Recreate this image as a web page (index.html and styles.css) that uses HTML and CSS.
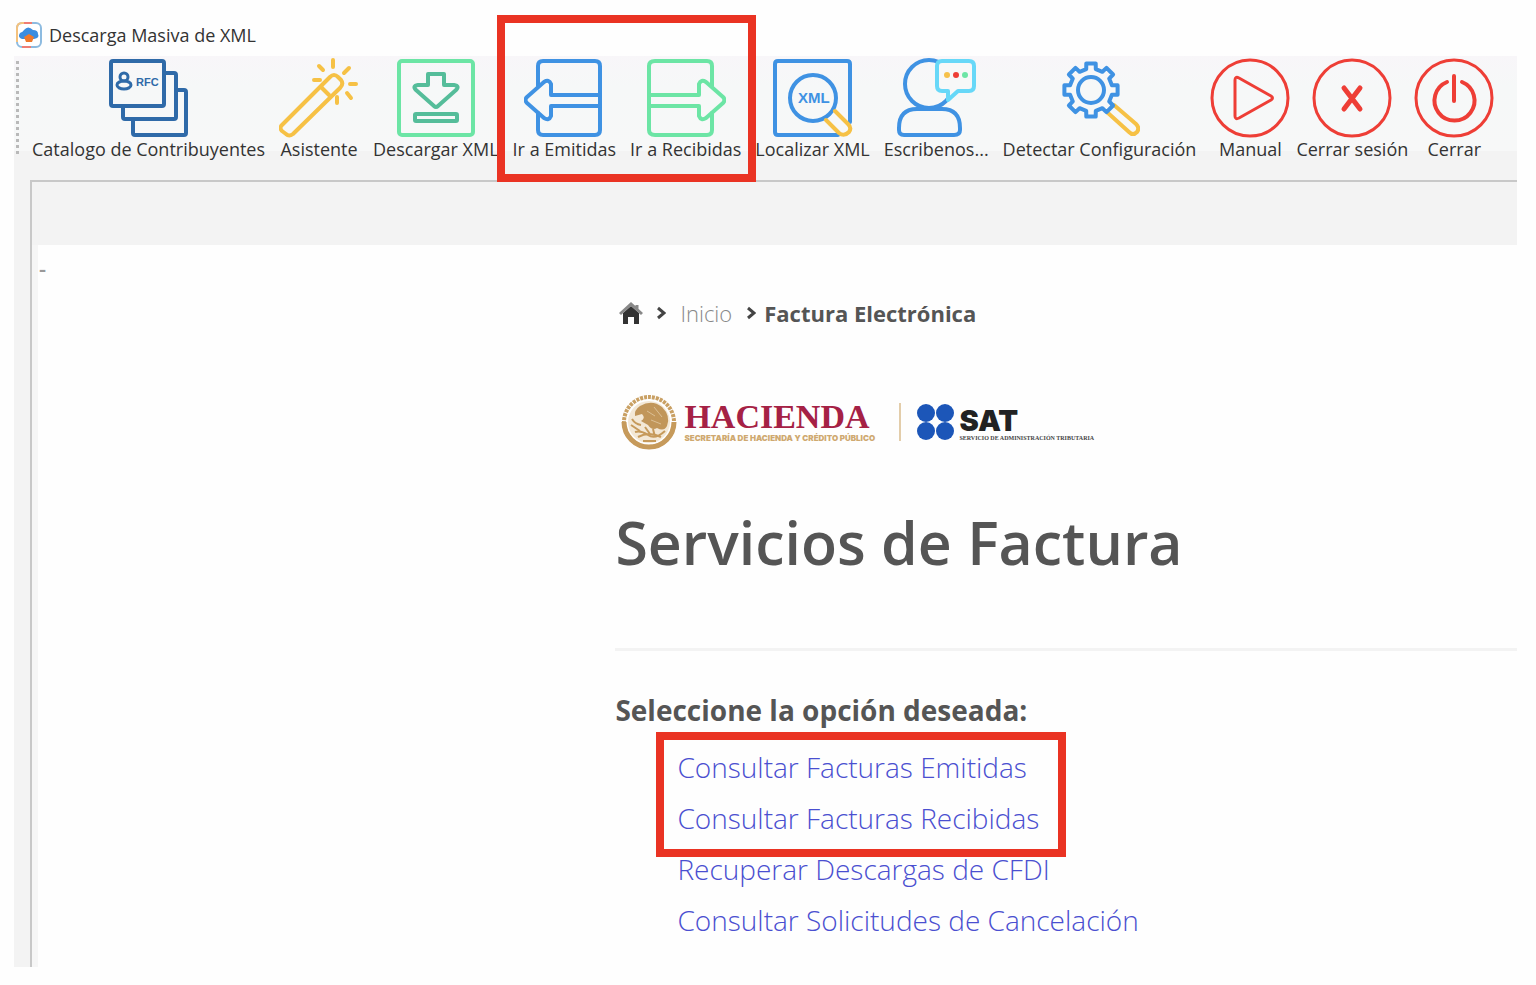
FILE: index.html
```
<!DOCTYPE html>
<html lang="es">

<head>
    <meta charset="UTF-8">
    <meta name="viewport" content="width=device-width, initial-scale=1.0">
    <title>Descarga Masiva de XML</title>
    <link rel="stylesheet" href="styles.css">
</head>

<body>
    <header class="title-bar">
        <svg class="app-icon" viewBox="0 0 26 26">
            <rect x="1" y="1" width="24" height="24" rx="5" fill="#fff" stroke="#8dbbe0" stroke-width="2" />
            <path d="M13 1H6Q1 1 1 6V20" fill="none" stroke="#f4c27e" stroke-width="2" />
            <path d="M8 1H16M6 25H15" fill="none" stroke="#ef7d74" stroke-width="2" />
            <path d="M6 17Q1 15 4 11Q7 10 8 8Q12 3 17 8Q22 8 22 12Q24 16 18 17Z" fill="#3b8de0" />
            <path d="M13 12L18 15L16 20H10L8 15Z" fill="#f0792b" />
        </svg>
        <span>Descarga Masiva de XML</span>
    </header>

    <nav class="toolbar">
        <span class="grip"></span>
        <button type="button" class="tool">
            <svg class="navy" viewBox="0 0 80 80">
                <rect x="2" y="3" width="53" height="45" rx="2" />
                <path d="M56 15H65Q67 15 67 17V59Q67 61 65 61H16Q14 61 14 59V49" />
                <path d="M68 32H75Q77 32 77 34V75Q77 77 75 77H26Q24 77 24 75V62" />
                <circle cx="15" cy="19" r="4" stroke-width="3" />
                <ellipse cx="15" cy="27" rx="7" ry="4" stroke-width="3" />
                <text x="27" y="28" font-size="11">RFC</text>
            </svg>
            <span>Catalogo de Contribuyentes</span>
        </button>
        <button type="button" class="tool">
            <svg class="yellow" viewBox="0 0 80 80">
                <path d="M3 67L51 19Q55 15 59 19L62 22Q65 26 61 30L14 76Q10 79 7 76L3 73Q0 70 3 67Z" />
                <path d="M42 29L50 37" />
                <path d="M54 2V9M40 8L44 12M35 22H41M70 10L65 15M71 26H77M68 35L72 40M58 39V45" />
            </svg>
            <span>Asistente</span>
        </button>
        <button type="button" class="tool">
            <svg class="green" viewBox="0 0 80 80">
                <rect x="3" y="3" width="74" height="74" rx="3" />
                <g class="teal">
                    <path d="M32 16H48V27H58Q64 28 60 32L42 48Q40 50 38 48L20 32Q16 28 22 27H32Z" />
                    <rect x="19" y="56" width="42" height="7" rx="1" />
                </g>
            </svg>
            <span>Descargar XML</span>
        </button>

        <div class="tool-group">
            <button type="button" class="tool">
                <svg class="blue" viewBox="0 0 80 80">
                    <path d="M14 28V8Q14 3 19 3H71Q76 3 76 8V72Q76 77 71 77H19Q14 77 14 72V55" />
                    <path d="M76 37H27V26Q25 21 20 24L3 39Q0 42 3 45L20 60Q25 63 27 58V48H76" />
                </svg>
                <span>Ir a Emitidas</span>
            </button>
            <button type="button" class="tool">
                <svg class="green" viewBox="0 0 80 80">
                    <path d="M66 28V8Q66 3 61 3H9Q3 3 3 8V72Q3 77 9 77H61Q66 77 66 72V55" />
                    <path d="M4 37H53V26Q55 21 60 24L77 39Q80 42 77 45L60 60Q55 63 53 58V48H4" />
                </svg>
                <span>Ir a Recibidas</span>
            </button>
            <span class="highlight"></span>
        </div>

        <button type="button" class="tool">
            <svg class="blue" viewBox="0 0 80 80">
                <path d="M77 64V6Q77 3 74 3H5Q2 3 2 6V74Q2 77 5 77H65" />
                <circle cx="40" cy="40" r="23" />
                <text x="25" y="45" font-size="15">XML</text>
                <path class="yellow" d="M62 53L75 66Q79 70 76 74Q71 79 66 75L53 62" />
            </svg>
            <span>Localizar XML</span>
        </button>
        <button type="button" class="tool">
            <svg class="blue" viewBox="0 0 80 80">
                <circle cx="33" cy="26" r="24" />
                <path d="M8 77Q3 77 3 72V70Q3 51 21 51H46Q64 51 64 70V72Q64 77 58 77Z" />
                <path class="sky" d="M46 3H73Q78 3 78 8V28Q78 33 73 33H62L52 42V33H46Q41 33 41 28V8Q41 3 46 3Z" />
                <circle class="dot" cx="51" cy="17" r="3" fill="#f6c14a" />
                <circle class="dot" cx="60" cy="17" r="3" fill="#ee3e36" />
                <circle class="dot" cx="69" cy="17" r="3" fill="#6ce5a5" />
            </svg>
            <span>Escribenos...</span>
        </button>
        <button type="button" class="tool">
            <svg class="blue" viewBox="0 0 80 80">
                <path class="yellow" d="M54 47L76 66Q80 70 77 74Q73 78 69 74L48 55" />
                <path transform="translate(31 32)" d="M20.9-4.8L26.6-4.7V4.7L20.9 4.8L18.2 11.4L22.1 15.5L15.5 22.1L11.4 18.2L4.8 20.9L4.7 26.6H-4.7L-4.8 20.9L-11.4 18.2L-15.5 22.1L-22.1 15.5L-18.2 11.4L-20.9 4.8L-26.6 4.7V-4.7L-20.9-4.8L-18.2-11.4L-22.1-15.5L-15.5-22.1L-11.4-18.2L-4.8-20.9L-4.7-26.6H4.7L4.8-20.9L11.4-18.2L15.5-22.1L22.1-15.5L18.2-11.4Z" />
                <circle cx="31" cy="32" r="13" />
            </svg>
            <span>Detectar Configuración</span>
        </button>

        <div class="tool-group round">
            <button type="button" class="tool">
                <svg class="red" viewBox="0 0 80 80">
                    <circle cx="40" cy="40" r="38" />
                    <path d="M25 22V58Q25 62 29 60L61 42Q64 40 61 38L29 20Q25 18 25 22Z" />
                </svg>
                <span>Manual</span>
            </button>
            <button type="button" class="tool">
                <svg class="red" viewBox="0 0 80 80">
                    <circle cx="40" cy="40" r="38" />
                    <path d="M32 30L48 51M48 30L32 51" stroke-width="5" />
                </svg>
                <span>Cerrar sesión</span>
            </button>
            <button type="button" class="tool">
                <svg class="red" viewBox="0 0 80 80">
                    <circle cx="40" cy="40" r="38" />
                    <path d="M33 24A20 20 0 1 0 48 24M40 18V43" stroke-width="4" />
                </svg>
                <span>Cerrar</span>
            </button>
        </div>
    </nav>

    <main class="frame">
        <div class="page">
            <span class="dash">-</span>
            <div class="content">
                <nav class="breadcrumb">
                    <svg class="home" viewBox="0 0 24 24">
                        <path d="M4 12L12 5L20 12V23H15V16H9V23H4Z" fill="#333" />
                        <path d="M1 13L12 3L23 13M18 4V8" fill="none" stroke="#888" stroke-width="3" />
                    </svg>
                    <svg class="chevron" viewBox="0 0 10 14">
                        <path d="M2 2L8 7L2 12" />
                    </svg>
                    <a href="#">Inicio</a>
                    <svg class="chevron" viewBox="0 0 10 14">
                        <path d="M2 2L8 7L2 12" />
                    </svg>
                    <strong>Factura Electrónica</strong>
                </nav>

                <div class="logos">
                    <svg class="seal" viewBox="0 0 56 56">
                        <circle cx="28" cy="28" r="25" fill="none" stroke="#c9a063" stroke-width="4" stroke-dasharray="3 1" />
                        <path d="M3 28A25 25 0 0 0 53 28" fill="none" stroke="#c69a5b" stroke-width="5" />
                        <circle cx="28" cy="28" r="21" fill="#f3e8d6" />
                        <path d="M19 12Q31 5 41 13Q50 22 46 32Q43 38 36 34Q31 37 27 31L20 27Q25 24 21 20L14 22Q13 16 19 12Z" fill="#c1965a" />
                        <path d="M11 25Q14 30 20 31M10 31L19 37M14 38Q20 36 27 41T44 37M17 43Q28 37 40 43M22 47H35M24 33L29 40M32 35L34 43" fill="none" stroke="#c69a5b" stroke-width="2" />
                        <path d="M26 17L34 22M33 13L41 23M30 26L40 30" fill="none" stroke="#dcc095" />
                    </svg>
                    <div class="hacienda">
                        <b>HACIENDA</b>
                        <small>SECRETARÍA DE HACIENDA Y CRÉDITO PÚBLICO</small>
                    </div>
                    <span class="divider"></span>
                    <svg class="sat-dots" viewBox="0 0 38 38" fill="#1c56b8">
                        <circle cx="9" cy="10" r="9" />
                        <circle cx="28" cy="10" r="9" />
                        <circle cx="9" cy="28" r="9" />
                        <circle cx="28" cy="28" r="9" />
                    </svg>
                    <div class="sat">
                        <b>SAT</b>
                        <small>SERVICIO DE ADMINISTRACIÓN TRIBUTARIA</small>
                    </div>
                </div>

                <h1>Servicios de Factura</h1>
                <hr>
                <h2>Seleccione la opción deseada:</h2>
                <ul class="options">
                    <li><a href="#">Consultar Facturas Emitidas</a></li>
                    <li><a href="#">Consultar Facturas Recibidas</a></li>
                    <li><a href="#">Recuperar Descargas de CFDI</a></li>
                    <li><a href="#">Consultar Solicitudes de Cancelación</a></li>
                    <li class="highlight" aria-hidden="true"></li>
                </ul>
            </div>
        </div>
    </main>
</body>

</html>
```
FILE: styles.css
```
* {
    box-sizing: border-box;
}

body {
    margin: 0;
    padding: 14px 19px 18px 14px;
    min-height: 100vh;
    display: flex;
    flex-direction: column;
    background-color: #fefefe;
    font-family: "Open Sans", sans-serif;
    color: #555;
}

.title-bar {
    display: flex;
    align-items: center;
    gap: 7px;
    height: 42px;
    padding-left: 2px;
    font-size: 18px;
    color: #333;
}

.app-icon {
    width: 26px;
    height: 26px;
}

.toolbar {
    display: flex;
    align-items: flex-start;
    gap: 14px;
    height: 124px;
    padding: 2px 0 0 2px;
    background: linear-gradient(#f8f6f9, #f6f8f8 30px, #f7f8f8 95px, #f3f3f3 95px);
}

.grip {
    width: 3px;
    height: 98px;
    flex-shrink: 0;
    margin-right: -1px;
    background: repeating-linear-gradient(transparent 0 3px, #b9b9b9 3px 6px);
}

.tool {
    display: flex;
    flex-direction: column;
    align-items: center;
    flex-shrink: 0;
    padding: 0;
    border: none;
    background: none;
    font-family: inherit;
    font-size: 18px;
    line-height: 22px;
    color: #333;
    white-space: nowrap;
    cursor: pointer;
}

.tool svg {
    width: 80px;
    height: 80px;
    fill: none;
    stroke-width: 4;
    stroke-linecap: round;
    stroke-linejoin: round;
}

.tool svg text {
    stroke: none;
    font-family: "Liberation Sans", sans-serif;
    font-weight: bold;
}

.navy {
    stroke: #2f6aa8;
}

.navy text {
    fill: #2f6aa8;
}

.blue {
    stroke: #3f92e3;
}

.blue text {
    fill: #3f92e3;
}

.yellow {
    stroke: #f6c145;
}

.green {
    stroke: #6ce5a5;
}

.teal {
    stroke: #55bd9a;
}

.sky {
    stroke: #67d8f8;
    fill: #f7f8f8;
}

.red {
    stroke: #ee3e36;
}

.tool .red {
    stroke-width: 3;
}

.dot {
    stroke: none;
}

.tool-group {
    position: relative;
    display: flex;
    gap: 14px;
}

.tool-group.round {
    gap: 6px;
}

/* red marker frames */
.highlight {
    position: absolute;
    border: 8px solid #ea3323;
    pointer-events: none;
}

.tool-group .highlight {
    top: -43px;
    bottom: -22px;
    left: -16px;
    right: -15px;
}

.frame {
    flex: 1;
    display: flex;
    padding: 0 0 0 16px;
    background-color: #f3f3f3;
}

.page {
    flex: 1;
    display: flex;
    border-top: 2px solid #c8c8c8;
    border-left: 2px solid #c8c8c8;
    background: linear-gradient(#f3f3f3 63px, transparent 63px), linear-gradient(90deg, #f6f6f6 6px, #fefefe 6px);
    padding: 74px 0 0 7px;
}

.dash {
    width: 39%;
    font-size: 22px;
    font-weight: 600;
    line-height: 24px;
    color: #999;
}

.content {
    flex: 1;
    padding-top: 41px;
}

.breadcrumb {
    display: flex;
    align-items: center;
    height: 32px;
    font-size: 22px;
}

.breadcrumb a {
    margin: 0 14px;
    color: #888;
    font-weight: 300;
    text-decoration: none;
}

.breadcrumb strong {
    margin-left: 8px;
}

.home {
    width: 24px;
    height: 24px;
    margin: 0 13px 0 4px;
}

.chevron {
    width: 10px;
    height: 14px;
    fill: none;
    stroke: #444;
    stroke-width: 3;
}

.logos {
    display: flex;
    align-items: center;
    margin-top: 65px;
    padding-left: 6px;
}

.seal {
    width: 56px;
    height: 56px;
    margin-right: 7px;
}

.hacienda,
.sat {
    display: flex;
    flex-direction: column;
    white-space: nowrap;
}

.hacienda {
    min-width: 199px;
}

.hacienda b {
    font-family: "Liberation Serif", serif;
    font-size: 34px;
    line-height: 32px;
    color: #a52145;
}

.hacienda small {
    font-family: Inter, sans-serif;
    font-size: 8px;
    font-weight: 900;
    line-height: 10px;
    color: #cfa970;
}

.divider {
    width: 2px;
    height: 38px;
    margin: 0 16px;
    background-color: #e3cdaa;
}

.sat-dots {
    width: 38px;
    height: 38px;
    margin-right: 4px;
}

.sat {
    padding-top: 4px;
}

.sat b {
    font-family: Inter, sans-serif;
    font-size: 29px;
    font-weight: 900;
    line-height: 28px;
    color: #222;
}

.sat small {
    font-family: "Liberation Serif", serif;
    font-size: 6px;
    font-weight: bold;
    line-height: 6px;
    color: #444;
}

h1 {
    margin: 52px 0 66px;
    font-size: 59px;
    font-weight: 600;
    line-height: 80px;
    white-space: nowrap;
}

hr {
    margin: 0;
    border: none;
    border-top: 3px solid #f3f3f3;
}

h2 {
    margin: 39px 0 12px;
    font-size: 28px;
    line-height: 40px;
}

.options {
    position: relative;
    margin: 0;
    padding: 0 0 0 62px;
    list-style: none;
    font-size: 28px;
    font-weight: 300;
    line-height: 51px;
}

.options a {
    color: #4a4fd0;
    text-decoration: none;
}

.options .highlight {
    top: -10px;
    left: 41px;
    width: 410px;
    height: 125px;
}
```
